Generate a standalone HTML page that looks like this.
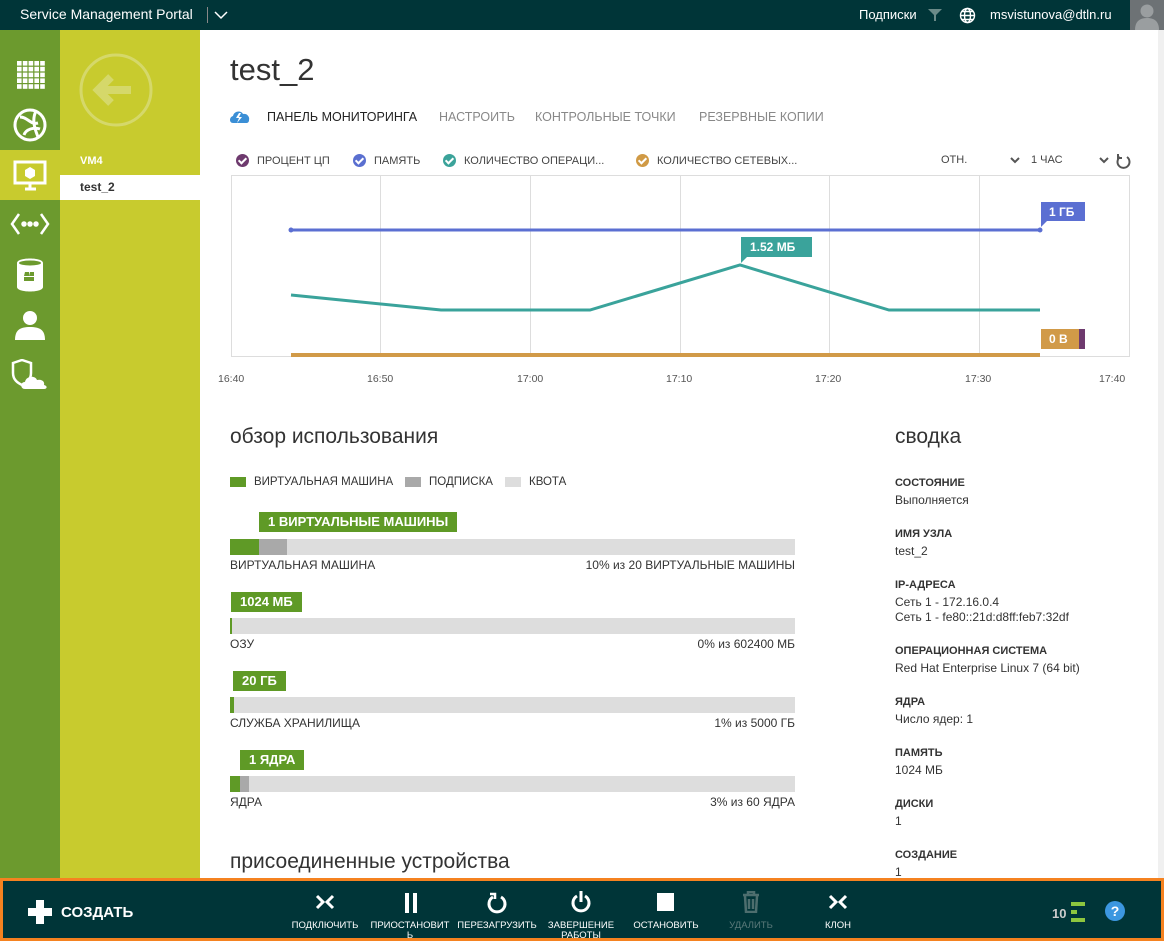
<!DOCTYPE html>
<html><head><meta charset="utf-8"><style>
*{margin:0;padding:0;box-sizing:border-box}
body{width:1164px;height:941px;overflow:hidden;font-family:"Liberation Sans","DejaVu Sans",sans-serif;background:#fff;position:relative;color:#333}
.abs{position:absolute}
.top{left:0;top:0;width:1164px;height:30px;background:#003538;color:#fff;font-size:14px}
.nav{left:0;top:30px;width:60px;height:848px;background:#6c9a2e}
.sub{left:60px;top:30px;width:140px;height:848px;background:#c8cb2e}
.tab{font-size:12.5px;color:#888;top:110px}
.leg{font-size:11px;color:#444;top:154px}
.chk{display:inline-block;width:13px;height:13px;border-radius:50%;vertical-align:-3px;margin-right:8px;position:relative}
.chk:after{content:"";position:absolute;left:4px;top:2px;width:3px;height:6px;border:solid #fff;border-width:0 2px 2px 0;transform:rotate(45deg)}
.tl{font-size:10.5px;color:#555;top:373px}
h2{font-weight:normal;font-size:21px;color:#333}
.bar{left:230px;width:565px;height:16px;background:#dddddd}
.tagg{background:#5f9a26;color:#fff;font-weight:bold;font-size:13px;height:20px;line-height:20px;padding:0 9px}
.lbl{font-size:12px;color:#333}
.sk{font-size:11px;font-weight:bold;color:#333;left:895px}
.sv{font-size:12px;color:#333;left:895px}
.bb{left:0;top:878px;width:1164px;height:63px;background:#003538;border:3px solid #f58220}
.bt{color:#fff;font-size:9.5px;text-align:center;width:80px;top:40px;line-height:10px}
</style></head><body>
<div class="abs top">
 <div class="abs" style="left:20px;top:6px">Service Management Portal</div>
 <div class="abs" style="left:207px;top:7px;width:1px;height:16px;background:#888"></div>
 <svg class="abs" style="left:214px;top:10px" width="14" height="10"><path d="M1 2l6 6 6-6" stroke="#fff" stroke-width="1.5" fill="none"/></svg>
 <div class="abs" style="left:859px;top:7px;font-size:13px">Подписки</div>
 <svg class="abs" style="left:927px;top:8px" width="16" height="14"><path d="M1 1h14l-6 6v6h-2V7z" fill="#6a8a88"/></svg>
 <svg class="abs" style="left:959px;top:7px" width="17" height="17" fill="none" stroke="#fff" stroke-width="1.4"><circle cx="8.5" cy="8.5" r="7"/><ellipse cx="8.5" cy="8.5" rx="3" ry="7"/><path d="M1.5 8.5h14M3 4.5h11M3 12.5h11"/></svg>
 <div class="abs" style="left:990px;top:7px;font-size:13px">msvistunova@dtln.ru</div>
 <div class="abs" style="left:1130px;top:0;width:34px;height:30px;background:#6d7275"></div>
 <svg class="abs" style="left:1130px;top:0" width="34" height="30"><circle cx="17" cy="11" r="6.5" fill="#9a9ea0"/><path d="M5 30c0-9 5-12 12-12s12 3 12 12z" fill="#9a9ea0"/></svg>
</div>
<div class="abs nav"></div>
<div class="abs" style="left:0;top:150px;width:60px;height:50px;background:#c8cb2e"></div>
<div class="abs sub"></div>
<svg class="abs" style="left:17px;top:61px" width="28" height="28" fill="#fff"><g id="g"><rect x="0" y="0" width="4.6" height="4.6"/><rect x="5.8" y="0" width="4.6" height="4.6"/><rect x="11.6" y="0" width="4.6" height="4.6"/><rect x="17.4" y="0" width="4.6" height="4.6"/><rect x="23.2" y="0" width="4.6" height="4.6"/></g><use href="#g" y="5.8"/><use href="#g" y="11.6"/><use href="#g" y="17.4"/><use href="#g" y="23.2"/></svg>
<svg class="abs" style="left:12px;top:107px" width="36" height="36"><circle cx="18" cy="18" r="15" fill="none" stroke="#fff" stroke-width="3"/><path d="M8 10c8 0 10 8 18 6M12 28c2-6 10-8 16-6M24 4c-4 8-2 16 2 26" stroke="#fff" stroke-width="3" fill="none"/></svg>
<svg class="abs" style="left:13px;top:160px" width="35" height="32"><rect x="2" y="2" width="30" height="21" fill="none" stroke="#fff" stroke-width="3"/><path d="M12 29h11M17 23v6" stroke="#fff" stroke-width="3"/><path d="M17 7l5 3v6l-5 3-5-3v-6z" fill="#fff"/></svg>
<svg class="abs" style="left:10px;top:212px" width="40" height="24" fill="none" stroke="#fff" stroke-width="2.5"><path d="M9 2L2 12l7 10M31 2l7 10-7 10"/><circle cx="14" cy="12" r="1.5" fill="#fff"/><circle cx="20" cy="12" r="1.5" fill="#fff"/><circle cx="26" cy="12" r="1.5" fill="#fff"/></svg>
<svg class="abs" style="left:16px;top:258px" width="28" height="34"><path d="M1 5c0-6 26-6 26 0v24c0 6-26 6-26 0z" fill="#fff"/><ellipse cx="14" cy="5" rx="11" ry="2.5" fill="#6c9a2e"/><path d="M9 14h4v4H8zM14 14h4v4h-5zM8 19h5v4H8zM13 19h5v4h-5z" fill="#6c9a2e"/></svg>
<svg class="abs" style="left:15px;top:310px" width="30" height="30" fill="#fff"><circle cx="15" cy="8" r="7"/><path d="M0 30c0-10 5-13 15-13s15 3 15 13z"/></svg>
<svg class="abs" style="left:11px;top:359px" width="38" height="30"><path d="M2 4l9-3 9 3v10c0 7-5 10-9 12-4-2-9-5-9-12z" fill="none" stroke="#fff" stroke-width="2.5"/><path d="M14 30c-5 0-5-7 0-7 1-6 10-7 12-2 4-1 8 1 7 5 4 1 3 4 0 4z" fill="#fff"/></svg>
<svg class="abs" style="left:78px;top:52px" width="76" height="76" fill="none" stroke="#d5d86a" stroke-width="3"><circle cx="38" cy="38" r="35"/><path d="M20 38h33M33 25L20 38l13 13" stroke-width="8"/></svg>
<div class="abs" style="left:80px;top:155px;font-size:11px;font-weight:bold;color:#fff">VM4</div>
<div class="abs" style="left:60px;top:175px;width:140px;height:25px;background:#fff"></div>
<div class="abs" style="left:80px;top:180px;font-size:12px;font-weight:bold;color:#333">test_2</div>

<div class="abs" style="left:230px;top:52px;font-size:31px;color:#333">test_2</div>
<svg class="abs" style="left:230px;top:110px" width="20" height="13"><path d="M3 13C-1 13-1 7 3 6 4 1 11 0 13 4c4-1 7 3 6 6 0 2-1 3-3 3z" fill="#3b8fd6"/><path d="M9 3l-3 5h3l-2 5 5-6H9l2-4z" fill="#fff"/></svg>
<div class="abs tab" style="left:267px;color:#222">ПАНЕЛЬ МОНИТОРИНГА</div>
<div class="abs tab" style="left:439px">НАСТРОИТЬ</div>
<div class="abs tab" style="left:535px">КОНТРОЛЬНЫЕ ТОЧКИ</div>
<div class="abs tab" style="left:699px">РЕЗЕРВНЫЕ КОПИИ</div>

<div class="abs leg" style="left:236px"><span class="chk" style="background:#6e3a6e"></span>ПРОЦЕНТ ЦП</div>
<div class="abs leg" style="left:353px"><span class="chk" style="background:#5a6fd0"></span>ПАМЯТЬ</div>
<div class="abs leg" style="left:443px"><span class="chk" style="background:#3ba39a"></span>КОЛИЧЕСТВО ОПЕРАЦИ...</div>
<div class="abs leg" style="left:636px"><span class="chk" style="background:#d09a45"></span>КОЛИЧЕСТВО СЕТЕВЫХ...</div>
<div class="abs leg" style="left:941px">ОТН.</div>
<svg class="abs" style="left:1010px;top:156px" width="10" height="8" fill="none" stroke="#555" stroke-width="2"><path d="M1 2l4 4 4-4"/></svg>
<div class="abs leg" style="left:1031px">1 ЧАС</div>
<svg class="abs" style="left:1098px;top:152px" width="34" height="18" fill="none" stroke="#555" stroke-width="2"><path d="M2 6l4 4 4-4"/><path d="M29 5a6 6 0 1 1-7 0"/><path d="M20 2v4h4" /></svg>

<svg class="abs" style="left:0;top:0" width="1164" height="400">
<rect x="231.5" y="175.5" width="898" height="181" fill="none" stroke="#ddd"/>
<g stroke="#ddd"><path d="M380.5 176v180M530.5 176v180M680.5 176v180M829.5 176v180M979.5 176v180"/></g>
<path d="M291 230H1040" stroke="#5b6fd2" stroke-width="3"/>
<g fill="#5b6fd2"><circle cx="291" cy="230" r="2.5"/><circle cx="1040" cy="230" r="2.5"/></g>
<path d="M291 295L441 310 590 310 740 265 889 310 1040 310" stroke="#3aa39b" stroke-width="3" fill="none"/>
<path d="M291 355H1040" stroke="#d19a48" stroke-width="4"/>
<rect x="1041" y="202" width="44" height="19" fill="#5b6fd2"/><path d="M1041 221v6l6-6z" fill="#5b6fd2"/>
<text x="1049" y="216" fill="#fff" font-size="12" font-weight="bold" font-family="Liberation Sans">1 ГБ</text>
<rect x="741" y="237" width="71" height="20" fill="#3aa39b"/><path d="M741 257v6l6-6z" fill="#3aa39b"/>
<text x="750" y="251" fill="#fff" font-size="12" font-weight="bold" font-family="Liberation Sans">1.52 МБ</text>
<rect x="1041" y="329" width="38" height="20" fill="#d19a48"/><rect x="1079" y="329" width="6" height="20" fill="#6e3a6e"/>
<text x="1049" y="343" fill="#fff" font-size="12" font-weight="bold" font-family="Liberation Sans">0 В</text>
</svg>
<div class="abs tl" style="left:218px">16:40</div>
<div class="abs tl" style="left:367px">16:50</div>
<div class="abs tl" style="left:517px">17:00</div>
<div class="abs tl" style="left:666px">17:10</div>
<div class="abs tl" style="left:815px">17:20</div>
<div class="abs tl" style="left:965px">17:30</div>
<div class="abs tl" style="left:1099px">17:40</div>

<h2 class="abs" style="left:230px;top:425px">обзор использования</h2>
<div class="abs" style="left:230px;top:477px;width:16px;height:10px;background:#5f9a26"></div>
<div class="abs lbl" style="left:254px;top:476px;font-size:11.5px">ВИРТУАЛЬНАЯ МАШИНА</div>
<div class="abs" style="left:405px;top:477px;width:16px;height:10px;background:#a9a9a9"></div>
<div class="abs lbl" style="left:429px;top:476px;font-size:11.5px">ПОДПИСКА</div>
<div class="abs" style="left:505px;top:477px;width:16px;height:10px;background:#ddd"></div>
<div class="abs lbl" style="left:529px;top:476px;font-size:11.5px">КВОТА</div>

<div class="abs tagg" style="left:259px;top:512px">1 ВИРТУАЛЬНЫЕ МАШИНЫ</div>
<div class="abs bar" style="top:539px"></div>
<div class="abs" style="left:230px;top:539px;width:29px;height:16px;background:#5f9a26"></div>
<div class="abs" style="left:259px;top:539px;width:28px;height:16px;background:#a9a9a9"></div>
<div class="abs lbl" style="left:230px;top:558px">ВИРТУАЛЬНАЯ МАШИНА</div>
<div class="abs lbl" style="left:570px;top:558px;width:225px;text-align:right">10% из 20 ВИРТУАЛЬНЫЕ МАШИНЫ</div>

<div class="abs tagg" style="left:231px;top:592px">1024 МБ</div>
<div class="abs bar" style="top:618px"></div>
<div class="abs" style="left:230px;top:618px;width:2px;height:16px;background:#5f9a26"></div>
<div class="abs lbl" style="left:230px;top:637px">ОЗУ</div>
<div class="abs lbl" style="left:570px;top:637px;width:225px;text-align:right">0% из 602400 МБ</div>

<div class="abs tagg" style="left:233px;top:671px">20 ГБ</div>
<div class="abs bar" style="top:697px"></div>
<div class="abs" style="left:230px;top:697px;width:4px;height:16px;background:#5f9a26"></div>
<div class="abs lbl" style="left:230px;top:716px">СЛУЖБА ХРАНИЛИЩА</div>
<div class="abs lbl" style="left:570px;top:716px;width:225px;text-align:right">1% из 5000 ГБ</div>

<div class="abs tagg" style="left:240px;top:750px">1 ЯДРА</div>
<div class="abs bar" style="top:776px"></div>
<div class="abs" style="left:230px;top:776px;width:10px;height:16px;background:#5f9a26"></div>
<div class="abs" style="left:240px;top:776px;width:9px;height:16px;background:#a9a9a9"></div>
<div class="abs lbl" style="left:230px;top:795px">ЯДРА</div>
<div class="abs lbl" style="left:570px;top:795px;width:225px;text-align:right">3% из 60 ЯДРА</div>

<h2 class="abs" style="left:230px;top:850px">присоединенные устройства</h2>

<h2 class="abs" style="left:895px;top:425px">сводка</h2>
<div class="abs sk" style="top:477px">СОСТОЯНИЕ</div><div class="abs sv" style="top:493px">Выполняется</div>
<div class="abs sk" style="top:528px">ИМЯ УЗЛА</div><div class="abs sv" style="top:544px">test_2</div>
<div class="abs sk" style="top:579px">IP-АДРЕСА</div><div class="abs sv" style="top:595px">Сеть 1 - 172.16.0.4</div><div class="abs sv" style="top:610px">Сеть 1 - fe80::21d:d8ff:feb7:32df</div>
<div class="abs sk" style="top:645px">ОПЕРАЦИОННАЯ СИСТЕМА</div><div class="abs sv" style="top:661px">Red Hat Enterprise Linux 7 (64 bit)</div>
<div class="abs sk" style="top:696px">ЯДРА</div><div class="abs sv" style="top:712px">Число ядер: 1</div>
<div class="abs sk" style="top:747px">ПАМЯТЬ</div><div class="abs sv" style="top:763px">1024 МБ</div>
<div class="abs sk" style="top:798px">ДИСКИ</div><div class="abs sv" style="top:814px">1</div>
<div class="abs sk" style="top:849px">СОЗДАНИЕ</div><div class="abs sv" style="top:865px">1</div>

<div class="abs" style="left:1158px;top:30px;width:6px;height:848px;background:#f0f0f0"></div>

<div class="abs bb">
 <svg class="abs" style="left:25px;top:19px" width="24" height="24" fill="#fff"><rect x="8" y="0" width="8" height="24"/><rect x="0" y="8" width="24" height="8"/></svg>
 <div class="abs" style="left:58px;top:23px;color:#fff;font-weight:bold;font-size:15px">СОЗДАТЬ</div>
 <svg class="abs" style="left:311px;top:10px" width="22" height="22" fill="none" stroke="#fff" stroke-width="3"><path d="M3 5l6 6-6 6M19 5l-6 6 6 6"/></svg>
 <div class="abs bt" style="left:282px">ПОДКЛЮЧИТЬ</div>
 <svg class="abs" style="left:400px;top:12px" width="16" height="20" fill="#fff"><rect x="2" width="4" height="20"/><rect x="10" width="4" height="20"/></svg>
 <div class="abs bt" style="left:367px">ПРИОСТАНОВИТ<br>Ь</div>
 <svg class="abs" style="left:483px;top:10px" width="22" height="24" fill="none" stroke="#fff" stroke-width="3"><path d="M15 6a8 8 0 1 1-8 0"/><path d="M4 3h5v5" stroke-width="2.5"/></svg>
 <div class="abs bt" style="left:454px">ПЕРЕЗАГРУЗИТЬ</div>
 <svg class="abs" style="left:567px;top:9px" width="22" height="24" fill="none" stroke="#fff" stroke-width="3"><path d="M15 6a8 8 0 1 1-8 0M11 1v11"/></svg>
 <div class="abs bt" style="left:538px">ЗАВЕРШЕНИЕ<br>РАБОТЫ</div>
 <div class="abs" style="left:654px;top:12px;width:17px;height:18px;background:#fff"></div>
 <div class="abs bt" style="left:623px">ОСТАНОВИТЬ</div>
 <svg class="abs" style="left:739px;top:10px" width="18" height="22" fill="none" stroke="#4d6e6e" stroke-width="2.5"><path d="M1 4h16M6 4V1h6v3M3 5l1 16h10l1-16M7 8v10M11 8v10"/></svg>
 <div class="abs bt" style="left:708px;color:#5b7a7a">УДАЛИТЬ</div>
 <svg class="abs" style="left:824px;top:10px" width="22" height="22" fill="none" stroke="#fff" stroke-width="3"><path d="M3 5l6 6-6 6M19 5l-6 6 6 6"/></svg>
 <div class="abs bt" style="left:795px">КЛОН</div>
 <div class="abs" style="left:1049px;top:25px;color:#ccc;font-weight:bold;font-size:13px">10</div>
 <svg class="abs" style="left:1066px;top:21px" width="20" height="20" fill="#8dc63f"><rect x="2" y="0" width="14" height="4"/><rect x="2" y="8" width="6" height="4"/><rect x="2" y="16" width="14" height="4"/></svg>
 <div class="abs" style="left:1102px;top:20px;width:20px;height:20px;border-radius:50%;background:#3c97e0;color:#fff;font-weight:bold;font-size:14px;text-align:center;line-height:20px">?</div>
</div>
</body></html>
